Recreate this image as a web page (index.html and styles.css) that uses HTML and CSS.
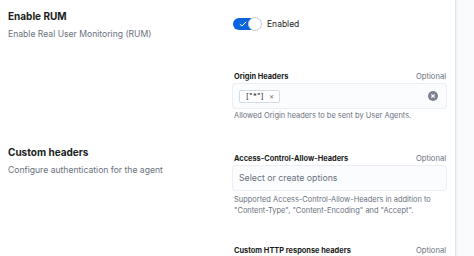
FILE: index.html
```html
<!DOCTYPE html>
<html lang="en">
<head>
    <meta charset="UTF-8">
    <title>Agent configuration</title>
    <link rel="stylesheet" href="styles.css">
</head>
<body>
    <div class="panel">
        <div class="group group-rum">
            <div class="group-info">
                <h3 class="group-title">Enable RUM</h3>
                <p class="group-desc">Enable Real User Monitoring (RUM)</p>
            </div>
            <div class="group-fields">
                <div class="switch-row">
                    <span class="switch">
                        <svg class="switch-check" width="8" height="6" viewBox="0 0 8 6">
                            <path d="M0.8 3.1 L2.9 5 L7.2 0.8" fill="none" stroke="#fff" stroke-width="1"/>
                        </svg>
                        <span class="switch-knob"></span>
                    </span>
                    <span class="switch-label">Enabled</span>
                </div>

                <div class="field field-origin">
                    <div class="field-head">
                        <span class="field-label">Origin Headers</span>
                        <span class="field-optional">Optional</span>
                    </div>
                    <div class="combo">
                        <span class="pill">["*"] <span class="pill-x">&#x2715;</span></span>
                        <svg class="combo-clear" width="10" height="10" viewBox="0 0 10 10">
                            <circle cx="5" cy="5" r="5" fill="#7a8290"/>
                            <path d="M3.3 3.3 L6.7 6.7 M6.7 3.3 L3.3 6.7" stroke="#fff" stroke-width="1.2"/>
                        </svg>
                    </div>
                    <p class="field-help">Allowed Origin headers to be sent by User Agents.</p>
                </div>
            </div>
        </div>

        <div class="group group-custom">
            <div class="group-info">
                <h3 class="group-title">Custom headers</h3>
                <p class="group-desc">Configure authentication for the agent</p>
            </div>
            <div class="group-fields">
                <div class="field">
                    <div class="field-head">
                        <span class="field-label">Access-Control-Allow-Headers</span>
                        <span class="field-optional">Optional</span>
                    </div>
                    <div class="combo">
                        <span class="combo-placeholder">Select or create options</span>
                    </div>
                    <p class="field-help help-two">Supported Access-Control-Allow-Headers in addition to "Content-Type", "Content-Encoding" and "Accept".</p>
                </div>

                <div class="field field-http">
                    <div class="field-head">
                        <span class="field-label">Custom HTTP response headers</span>
                        <span class="field-optional">Optional</span>
                    </div>
                </div>
            </div>
        </div>
    </div>
</body>
</html>
```

FILE: styles.css
```css
body {
    margin: 0;
    background-color: #fafbfc;
    font-family: Inter, "Noto Sans", sans-serif;
    color: #1a1c21;
    overflow: hidden;
}

.panel {
    width: 438px;
    height: 256px;
    padding: 0 9px 0 8px;
    background-color: #fff;
    border-right: 1px solid #e3e6ea;
    box-shadow: 1px 0 2px rgba(0, 0, 0, 0.06);
}

.group {
    display: grid;
    grid-template-columns: 1fr 213px;
}

.group-rum {
    padding-top: 9px;
}

.group-custom {
    margin-top: 24px;
}

.group-title {
    margin: 0;
    font-size: 10px;
    line-height: 14px;
    font-weight: 700;
}

.group-desc {
    margin: 5px 0 0;
    font-size: 8.6px;
    line-height: 13px;
    color: #69707d;
}

/* switch */
.group-rum .group-fields {
    padding-top: 9px;
}

.switch-row {
    display: flex;
    align-items: center;
    height: 12px;
}

.switch {
    position: relative;
    width: 28px;
    height: 12px;
    border-radius: 6px;
    background-color: #0b64dd;
}

.switch-check {
    position: absolute;
    left: 6px;
    top: 3px;
}

.switch-knob {
    position: absolute;
    right: -1px;
    top: -1px;
    width: 12px;
    height: 12px;
    border-radius: 50%;
    background-color: #fff;
    border: 1px solid #c5ccd7;
}

.switch-label {
    margin-left: 6px;
    font-size: 8.5px;
    line-height: 12px;
}

/* fields */
.field-origin {
    margin-top: 41px;
}

.group-custom .group-fields {
    padding-top: 8px;
}

.field-http {
    margin-top: 29px;
}

.field-head {
    display: flex;
    justify-content: space-between;
    align-items: baseline;
    padding-left: 1px;
    line-height: 11px;
}

.field-label {
    font-size: 7.4px;
    font-weight: 700;
}

.field-optional {
    font-size: 7.6px;
    color: #69707d;
}

.combo {
    display: flex;
    align-items: center;
    justify-content: space-between;
    height: 24px;
    margin-top: 2px;
    padding: 0 8px 0 6px;
    background-color: #fbfcfd;
    border-radius: 3px;
    box-shadow: 0 0 0 1px rgba(17, 42, 134, 0.08);
}

.pill {
    display: inline-flex;
    align-items: center;
    height: 13px;
    padding: 0 5px 0 6px;
    font-size: 7.6px;
    letter-spacing: 0.3px;
    background-color: #fff;
    border: 1px solid #d3dae6;
    border-radius: 2px;
    box-sizing: border-box;
}

.pill-x {
    margin-left: 5px;
    font-size: 6px;
    color: #69707d;
}

.combo-placeholder {
    font-size: 8.75px;
    color: #69707d;
}

.field-help {
    margin: 1.5px 0 0;
    padding-left: 1px;
    font-size: 7.45px;
    line-height: 11px;
    color: #69707d;
}

.help-two {
    margin-top: 4px;
    line-height: 11px;
}
```
